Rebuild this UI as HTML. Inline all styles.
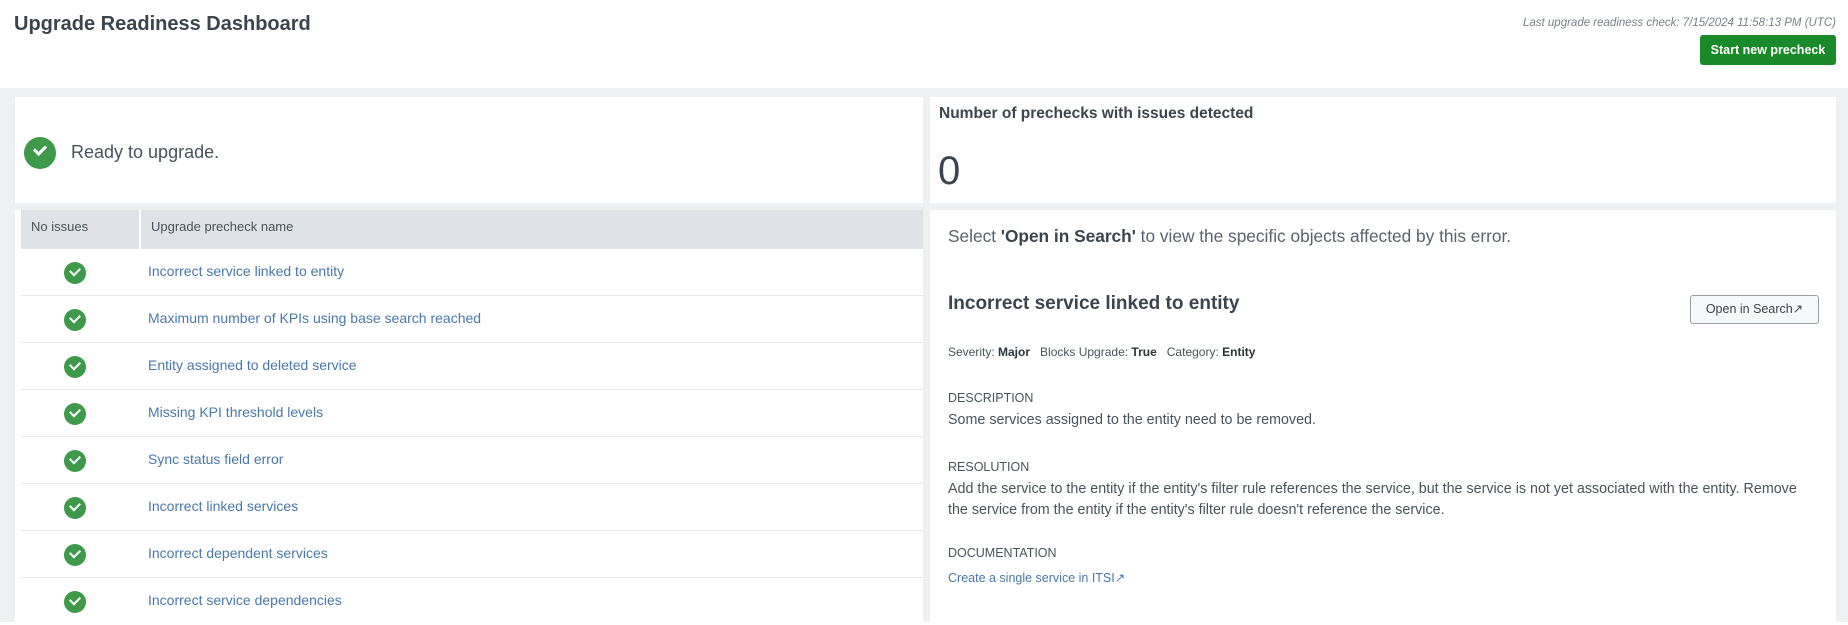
<!DOCTYPE html>
<html><head><style>
*{margin:0;padding:0;box-sizing:border-box}
body{width:1848px;height:622px;overflow:hidden;background:#fff;font-family:"Liberation Sans",sans-serif;color:#3c444d;position:relative}
.a{position:absolute;white-space:nowrap}
.gray{position:absolute;left:0;top:88px;width:1848px;height:534px;background:#eef0f2}
.panel{position:absolute;background:#fff}
.row{position:absolute;left:21px;width:902px;height:47px;border-bottom:1px solid #e6e8eb}
.ck{position:absolute;left:43px;top:13px;width:22px;height:22px;border-radius:50%;background:#3e9a4a}
.ck:after{content:"";position:absolute;left:6px;top:5px;width:8px;height:5px;border-left:2px solid #fff;border-bottom:2px solid #fff;transform:rotate(-45deg)}
.lk{position:absolute;left:127px;top:14px;font-size:14px;color:#4a79a8}
.lbl{font-size:12.5px;color:#4a525b}
.txt{font-size:14.3px;color:#4a525b}
</style></head><body>
<div class="a" style="left:14px;top:13px;font-size:20px;font-weight:bold;color:#3c444d">Upgrade Readiness Dashboard</div>
<div class="a" style="right:12px;top:17px;font-size:11.5px;font-style:italic;color:#7a8088">Last upgrade readiness check: 7/15/2024 11:58:13 PM (UTC)</div>
<div class="a" style="left:1700px;top:35px;width:136px;height:30px;background:#1a8929;border-radius:3px;color:#fff;font-size:12.5px;font-weight:bold;text-align:center;line-height:30px">Start new precheck</div>
<div class="gray"></div>
<div class="panel" style="left:15px;top:97px;width:908px;height:106px"></div>
<div class="a" style="left:24px;top:137px;width:32px;height:32px;border-radius:50%;background:#3e9a4a"></div>
<div class="a" style="left:34px;top:145px;width:12px;height:8px;border-left:3px solid #fff;border-bottom:3px solid #fff;transform:rotate(-45deg)"></div>
<div class="a" style="left:71px;top:142px;font-size:18px;color:#4a525b">Ready to upgrade.</div>
<div class="panel" style="left:930px;top:97px;width:906px;height:106px"></div>
<div class="a" style="left:939px;top:105px;font-size:15.5px;font-weight:bold;color:#3c444d">Number of prechecks with issues detected</div>
<div class="a" style="left:938px;top:149px;font-size:40px;color:#3c444d">0</div>
<div class="panel" style="left:15px;top:210px;width:908px;height:412px"></div>
<div class="a" style="left:21px;top:210px;width:902px;height:39px;background:#dfe3e8"></div>
<div class="a" style="left:139px;top:210px;width:2px;height:39px;background:#fff"></div>
<div class="a" style="left:31px;top:219px;font-size:13px;color:#4a525b">No issues</div>
<div class="a" style="left:151px;top:219px;font-size:13px;color:#4a525b">Upgrade precheck name</div>
<div class="row" style="top:249px"><div class="ck"></div><div class="lk">Incorrect service linked to entity</div></div>
<div class="row" style="top:296px"><div class="ck"></div><div class="lk">Maximum number of KPIs using base search reached</div></div>
<div class="row" style="top:343px"><div class="ck"></div><div class="lk">Entity assigned to deleted service</div></div>
<div class="row" style="top:390px"><div class="ck"></div><div class="lk">Missing KPI threshold levels</div></div>
<div class="row" style="top:437px"><div class="ck"></div><div class="lk">Sync status field error</div></div>
<div class="row" style="top:484px"><div class="ck"></div><div class="lk">Incorrect linked services</div></div>
<div class="row" style="top:531px"><div class="ck"></div><div class="lk">Incorrect dependent services</div></div>
<div class="row" style="top:578px;border:none"><div class="ck"></div><div class="lk">Incorrect service dependencies</div></div>
<div class="panel" style="left:930px;top:210px;width:906px;height:412px"></div>
<div class="a" style="left:948px;top:226px;font-size:17.3px;color:#5a626b">Select <b style="color:#3c444d">'Open in Search'</b> to view the specific objects affected by this error.</div>
<div class="a" style="left:948px;top:293px;font-size:19px;font-weight:bold;color:#3c444d">Incorrect service linked to entity</div>
<div class="a" style="left:1690px;top:295px;width:129px;height:29px;border:1px solid #9aa0a6;border-radius:3px;background:#f7f8fa;font-size:12.5px;color:#3c444d;text-align:center;line-height:27px">Open in Search&#8599;</div>
<div class="a lbl" style="left:948px;top:345px;font-size:12px">Severity: <b style="color:#2c333a">Major</b>&nbsp;&nbsp; Blocks Upgrade: <b style="color:#2c333a">True</b>&nbsp;&nbsp; Category: <b style="color:#2c333a">Entity</b></div>
<div class="a lbl" style="left:948px;top:391px">DESCRIPTION</div>
<div class="a txt" style="left:948px;top:412px">Some services assigned to the entity need to be removed.</div>
<div class="a lbl" style="left:948px;top:460px">RESOLUTION</div>
<div class="a txt" style="left:948px;top:481px">Add the service to the entity if the entity's filter rule references the service, but the service is not yet associated with the entity. Remove</div>
<div class="a txt" style="left:948px;top:502px">the service from the entity if the entity's filter rule doesn't reference the service.</div>
<div class="a lbl" style="left:948px;top:546px">DOCUMENTATION</div>
<div class="a" style="left:948px;top:570px;font-size:12.5px;color:#4a79a8">Create a single service in ITSI&#8599;</div>
</body></html>
